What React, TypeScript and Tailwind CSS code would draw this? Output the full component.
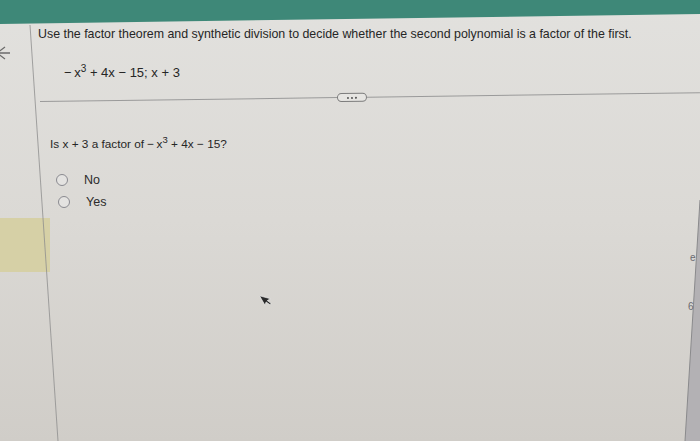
import React from "react";

function Radio({ label, shift = 0 }: { label: string; shift?: number }) {
  return (
    <div className="flex items-center h-[16px]" style={{ paddingLeft: 26 + shift }}>
      <span className="w-[12px] h-[12px] rounded-full border-[1.5px] border-[#8a8a90] bg-[#e4e3e1] shrink-0" />
      <span className="ml-[16px] text-[12.5px] text-[#2b2b2b]">{label}</span>
    </div>
  );
}

export default function App() {
  return (
    <div
      className="relative w-[700px] h-[441px] overflow-hidden bg-gradient-to-b from-[#e2e1de] via-[#dbd9d5] to-[#d0cdc8]"
      style={{ fontFamily: '"Liberation Sans", Arial, sans-serif' }}
    >
      <div className="h-[24px] bg-[#3e8878] [clip-path:polygon(0_0,100%_0,100%_14px,0_24px)] -mb-[2px]" />
      <div className="flex">
        <aside className="w-[30px] shrink-0 flex flex-col">
          <div className="mt-[24px] h-[14px] flex items-center">
            <svg width="16" height="14" viewBox="0 0 16 14" className="-ml-[4px]">
              <path d="M1 7 H14 M1 7 L9 1 M1 7 L9 13" stroke="#6b6b6b" strokeWidth="1.3" fill="none" />
            </svg>
          </div>
          <div className="mt-[158px] w-[50px] h-[54px] bg-[#d6d0a6]" />
        </aside>
        <main className="flex-1 pt-[4px] text-[#262626]">
          <div className="pl-[8px] text-[12.4px] leading-[16px]">
            Use the factor theorem and synthetic division to decide whether the second polynomial is a factor of the first.
          </div>
          <div className="pl-[34px] mt-[23px] h-[16px] text-[13px] leading-[16px]">
            −&thinsp;x<sup className="text-[10px] leading-none relative -top-[5px]">3</sup> + 4x − 15; x + 3
          </div>
          <div className="mt-[16px] ml-[10px] flex items-center h-[9px] [transform:rotate(-0.75deg)] origin-left">
            <div className="w-[297px] h-px bg-[#9a9a9a]" />
            <div className="w-[30px] h-[9px] rounded-full border border-[#7c7c7c] bg-[#e6e5e2] flex items-center justify-center gap-[2px]">
              <span className="w-[2px] h-[2px] rounded-full bg-[#555]" />
              <span className="w-[2px] h-[2px] rounded-full bg-[#555]" />
              <span className="w-[2px] h-[2px] rounded-full bg-[#555]" />
            </div>
            <div className="flex-1 h-px bg-[#9a9a9a]" />
          </div>
          <div className="pl-[20px] mt-[30px] h-[16px] text-[11.8px] leading-[16px]">
            Is x + 3 a factor of −&thinsp;x<sup className="text-[9.5px] leading-none relative -top-[5px]">3</sup> + 4x − 15?
          </div>
          <div className="mt-[20px] flex flex-col gap-[6px]">
            <Radio label="No" />
            <Radio label="Yes" shift={2} />
          </div>
        </main>
      </div>
      <svg className="absolute inset-0 pointer-events-none" width="700" height="441" viewBox="0 0 700 441">
        <line x1="30" y1="25" x2="58" y2="441" stroke="#8e8e8e" strokeWidth="0.8" />
        <polygon points="700,200 700,441 685,441" fill="#b3b1b4" />
        <line x1="700" y1="200" x2="685" y2="441" stroke="#8a8a8c" strokeWidth="1" />
        <text x="690" y="261" fontSize="10" fill="#6a6a70" fontFamily="Liberation Sans, Arial, sans-serif">e</text>
        <text x="688" y="310" fontSize="10" fill="#6a6a70" fontFamily="Liberation Sans, Arial, sans-serif">6</text>
        <path d="M262 293 L262 304 L264.6 301.6 L266.6 306 L268.2 305.3 L266.3 301 L270 301 Z" fill="#2a2a2a" stroke="#f2f2f2" strokeWidth="0.6" transform="rotate(-30 266 299)" />
      </svg>
    </div>
  );
}
